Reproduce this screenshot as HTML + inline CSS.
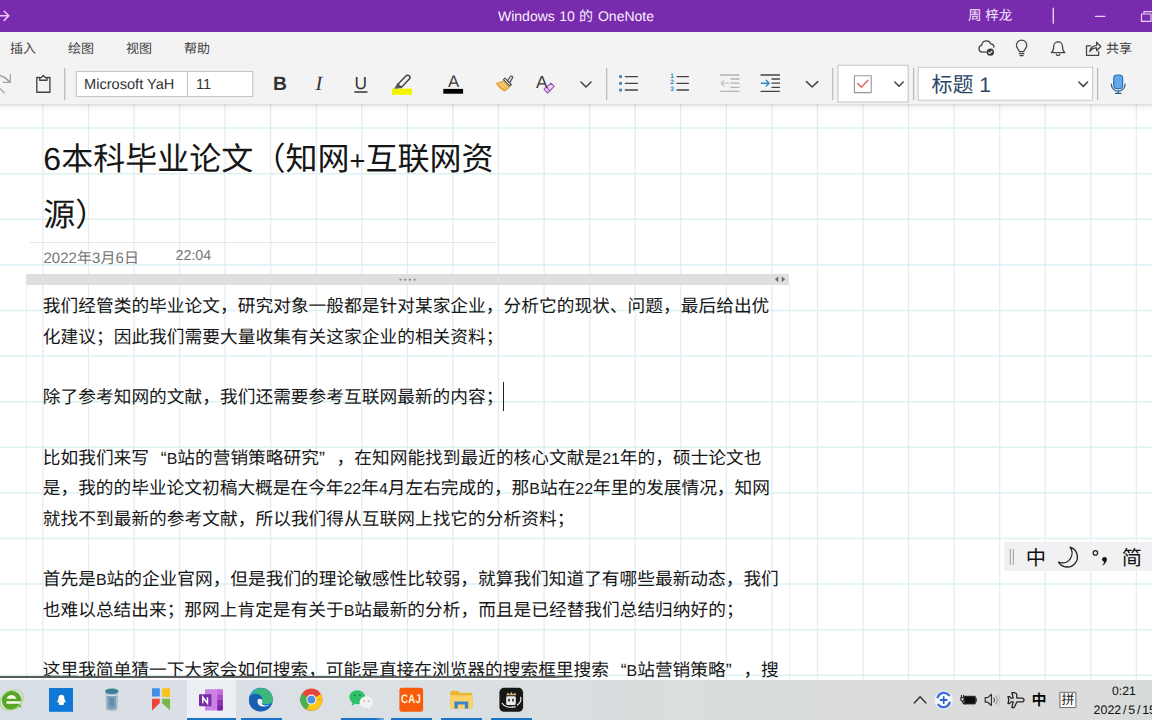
<!DOCTYPE html>
<html lang="zh-CN">
<head>
<meta charset="utf-8">
<title>Windows 10 的 OneNote</title>
<style>
*{box-sizing:border-box;margin:0;padding:0}
html,body{width:1152px;height:720px;overflow:hidden;background:#fff}
body{font-family:"Liberation Sans",sans-serif;position:relative;color:#000}
.abs{position:absolute}
/* title bar */
#titlebar{position:absolute;left:0;top:0;width:1152px;height:32px;background:#792bae;color:#fff}
#titlebar .t{position:absolute;top:7.400px;color:#f9effd;font-size:14px;line-height:18px;white-space:nowrap}
/* ribbon */
#ribbon{position:absolute;left:0;top:32px;width:1152px;height:72px;background:#f3f3f3}
#ribbon:after{content:"";position:absolute;left:0;top:72px;width:1152px;height:8px;background:linear-gradient(rgba(0,0,0,.15) 0,rgba(0,0,0,.06) 25%,rgba(0,0,0,.02) 60%,rgba(0,0,0,0) 100%)}
.menu{position:absolute;top:9px;font-size:13px;line-height:16px;color:#444;white-space:nowrap}
/* page */
#page{position:absolute;left:0;top:104px;width:1152px;height:576px;background:#fff;overflow:hidden}
#grid{position:absolute;left:0;top:0}
body{text-rendering:geometricPrecision}
.ttl{position:absolute;left:43.300px;font-size:32px;line-height:40px;white-space:nowrap;color:#161616;width:450.300px;text-align:justify;text-align-last:justify}
.ln{position:absolute;left:42.800px;font-size:17.700px;line-height:24px;height:24px;white-space:nowrap;color:#161616;text-align:justify;text-align-last:justify}
.l{font-size:.9em}
.q{display:inline-block;width:1em}
.ql{text-align:right;text-align-last:right}.qr{text-align:left;text-align-last:left}
/* taskbar */
#taskbar{position:absolute;left:0;top:679.500px;width:1152px;height:40.500px;background:linear-gradient(90deg,#d8dee5 0,#dbe0e5 30%,#d8dede 55%,#dbdcdc 75%,#dcdcdc 95%,#d6dcd9 100%)}
</style>
</head>
<body>
<div id="page">
  <svg id="grid" width="1152" height="576">
    <path d="M0 24.1H1152M0 69.7H1152M0 115.3H1152M0 160.9H1152M0 206.5H1152M0 252.1H1152M0 297.7H1152M0 343.3H1152M0 388.9H1152M0 434.5H1152M0 480.1H1152M0 525.7H1152M0 571.3H1152" stroke="#ddf1f3" stroke-width="1.5"/>
    <path d="M-2.7 0V576M42.9 0V576M88.5 0V576M134.0 0V576M179.6 0V576M225.1 0V576M270.7 0V576M316.3 0V576M361.8 0V576M407.4 0V576M452.9 0V576M498.5 0V576M544.1 0V576M589.6 0V576M635.2 0V576M680.7 0V576M726.3 0V576M771.9 0V576M817.4 0V576M863.0 0V576M908.5 0V576M954.1 0V576M999.7 0V576M1045.2 0V576M1090.8 0V576M1136.3 0V576M1181.9 0V576" stroke="#e5ebee" stroke-width="1.25"/>
  </svg>
</div>

<div class="ttl" style="top:139.300px">6本科毕业论文（知网<span style="font-size:.85em">+</span>互联网资</div>
<div class="ttl" style="top:194.500px;width:64px">源）</div>
<div class="abs" style="left:43.500px;top:250px;font-size:15px;line-height:18px;color:#767676;white-space:nowrap;width:95.500px;text-align:justify;text-align-last:justify">2022年3月6日</div>
<div class="abs" style="left:175.500px;top:246.500px;font-size:14.300px;line-height:18px;color:#767676;white-space:nowrap">22:04</div>

<div class="abs" style="left:30px;top:242px;width:467px;height:1px;background:#e6e6e6"></div>
<div class="abs" style="left:26px;top:274px;width:763px;height:10.500px;background:#dfdfdf"></div>
<div class="abs" style="left:26px;top:284px;width:1px;height:396px;background:#eeeeee"></div>
<div class="abs" style="left:788.500px;top:284px;width:1px;height:396px;background:#eeeeee"></div>
<svg class="abs" style="left:390px;top:274px" width="410" height="11" viewBox="390 274 410 11">
  <path d="M399.500 278.800h2v1.800h-2zM404.200 278.800h2v1.800h-2zM408.900 278.800h2v1.800h-2zM413.600 278.800h2v1.800h-2z" fill="#858585"/>
  <path d="M778.300 276.300v6l-3.300-3zM781.800 276.300v6l3.300-3z" fill="#6e6e6e"/>
</svg>
<div class="abs" style="left:503.100px;top:382px;width:1.300px;height:29px;background:#222"></div>

<div class="ln" style="top:294.20px;width:726.5px">我们经管类的毕业论文，研究对象一般都是针对某家企业，分析它的现状、问题，最后给出优</div>
<div class="ln" style="top:324.53px;width:460.7px">化建议；因此我们需要大量收集有关这家企业的相关资料；</div>
<div class="ln" style="top:385.19px;width:460.7px">除了参考知网的文献，我们还需要参考互联网最新的内容；</div>
<div class="ln" style="top:445.85px;width:718.7px">比如我们来写<span class="q ql">“</span><span class="l">B</span>站的营销策略研究<span class="q qr">”</span>，在知网能找到最近的核心文献是<span class="l">21</span>年的，硕士论文也</div>
<div class="ln" style="top:476.18px;width:727.2px">是，我的的毕业论文初稿大概是在今年<span class="l">22</span>年<span class="l">4</span>月左右完成的，那<span class="l">B</span>站在<span class="l">22</span>年里的发展情况，知网</div>
<div class="ln" style="top:506.51px;width:531.6px">就找不到最新的参考文献，所以我们得从互联网上找它的分析资料；</div>
<div class="ln" style="top:567.17px;width:736.0px">首先是<span class="l">B</span>站的企业官网，但是我们的理论敏感性比较弱，就算我们知道了有哪些最新动态，我们</div>
<div class="ln" style="top:597.50px;width:700.8px">也难以总结出来；那网上肯定是有关于<span class="l">B</span>站最新的分析，而且是已经替我们总结归纳好的；</div>
<div class="ln" style="top:658.16px;width:736.0px">这里我简单猜一下大家会如何搜索，可能是直接在浏览器的搜索框里搜索<span class="q ql">“</span><span class="l">B</span>站营销策略<span class="q qr">”</span>，搜</div>

<div id="titlebar">
  <svg class="abs" style="left:0;top:0" width="1152" height="32" viewBox="0 0 1152 32" fill="none" stroke-linecap="round" stroke-linejoin="round">
    <path d="M-4 15.8H8.6M4.2 11.2L8.8 15.8L4.2 20.4" stroke="#eec8ff" stroke-width="1.5"/>
    <path d="M1053.3 8.2V23.2" stroke="#f1dcfa" stroke-width="1.3"/>
    <path d="M1095.5 16.4H1104.8" stroke="#e9cdf5" stroke-width="1.2"/>
    <path d="M1141.5 14H1151v7.4H1141.5zM1144 14v-2.4h9" stroke="#ecd2f7" stroke-width="1.2"/>
  </svg>
  <div class="t" style="left:498px;width:156px;text-align:justify;text-align-last:justify">Windows 10 的 OneNote</div>
  <div class="t" style="left:968px;width:44px;font-size:13.5px;text-align:justify;text-align-last:justify;color:#f6e6fc">周 梓龙</div>
</div>

<div id="ribbon">
  <div class="menu" style="left:10px">插入</div>
  <div class="menu" style="left:68px">绘图</div>
  <div class="menu" style="left:126px">视图</div>
  <div class="menu" style="left:184px">帮助</div>
  <div class="menu" style="left:1106px;color:#333">共享</div>
  <!-- right status icons (y offset: ribbon top = 32) -->
  <svg class="abs" style="left:970px;top:4px" width="140" height="26" viewBox="970 36 140 26" fill="none" stroke="#444" stroke-width="1.25" stroke-linecap="round" stroke-linejoin="round">
    <!-- cloud -->
    <path d="M986.5 52.2H982.3a3.6 3.6 0 0 1-.5-7.1a4.6 4.6 0 0 1 8.9-1.2a3.4 3.4 0 0 1 3.3 3.2"/>
    <circle cx="990.4" cy="52.2" r="3.6" fill="#3a3a3a" stroke="none"/>
    <path d="M988.7 52.3l1.2 1.2l2.1-2.4" stroke="#fff" stroke-width="1.1"/>
    <!-- bulb -->
    <path d="M1019.3 51.6c0-2.2-2.9-3.2-2.9-6.3a5.2 5.2 0 0 1 10.4 0c0 3.100-2.900 4.100-2.900 6.300zM1019.300 53.600h4.600M1020 55.500h3.200"/>
    <!-- bell -->
    <path d="M1051.400 52.600c1.900-1.400 2.300-2.900 2.300-6.200a4.400 4.400 0 0 1 8.800 0c0 3.300.400 4.800 2.300 6.200zM1056.300 54.300a1.900 1.900 0 0 0 3.600 0"/>
    <!-- share -->
    <path d="M1090.500 45.800H1086.500V55.300H1098.700V51.600M1089.800 51.800c.4-3.900 2.900-6.300 6.800-6.300V42.200l4.200 4.300l-4.200 4.300V47.800c-3.100 0-5.300 1.100-6.800 4z"/>
  </svg>

  <!-- toolbar row, coords in page space via viewBox (y 60..108) -->
  <svg class="abs" style="left:0;top:28px" width="1152" height="48" viewBox="0 60 1152 48" fill="none" stroke-linecap="round" stroke-linejoin="round">
    <!-- redo (clipped) -->
    <path d="M-1 75.300C3.200 76.200 6.600 78.400 9.600 81.700M10.300 74.700V82.300H3.200M-1 87.600L4.400 92.900" stroke="#a3a3a3" stroke-width="1.3"/>
    <!-- clipboard -->
    <path d="M39.500 77.500H36.800V92.200H49.900V77.500H47.200M39.700 80.200V77.600H41.300L43.300 75.500L45.400 77.600H47V80.200z" stroke="#444" stroke-width="1.35"/>
    <!-- separators -->
    <path d="M64.700 68.300V99.700M606.700 68.300V99.500M832.700 68.300V99.500M913.600 68.300V99.500M1097.600 68.300V99.500" stroke="#bdbdbd" stroke-width="1.3"/>
    <!-- font boxes -->
    <rect x="76.300" y="71.500" width="176.400" height="25" fill="#fff" stroke="#c6c6c6" stroke-width="1.100"/>
    <path d="M187.500 71.500V96.500" stroke="#c6c6c6" stroke-width="1.100"/>
    <!-- underline for U -->
    <path d="M354.800 92H367" stroke="#333" stroke-width="1.300"/>
    <!-- highlighter -->
    <rect x="392" y="88.600" width="20" height="6.200" fill="#f4f400" stroke="none"/>
    <path d="M397.900 84.200L405.900 75.900A2.300 2.300 0 0 1 409.300 79.100L401.300 87.400z" stroke="#3f4246" stroke-width="1.45"/>
    <path d="M397.700 84L401.500 87.600L395.200 88.300z" fill="#4a5157" stroke="#4a5157" stroke-width=".8"/>
    <!-- font color bar -->
    <rect x="443.300" y="88.900" width="19.800" height="4.800" fill="#000" stroke="none"/>
    <!-- format painter -->
    <path d="M503 81.200L509.200 87.200L504.300 91.100C501.200 89.300 498.400 86.500 496.500 83.400z" fill="#f4cd7e" stroke="#e3a12b" stroke-width="1.1"/>
    <path d="M498.800 84.600C501 87 503.600 88.900 506 90M500.500 82.800C502.800 85.200 505.500 87.300 507.800 88.400" stroke="#e0a030" stroke-width=".9"/>
    <path d="M503.400 79.600L504.900 78.200L511.300 84.500L509.800 86z" fill="#fbfbfb" stroke="#4d4d4d" stroke-width="1.15"/>
    <path d="M507.600 80.700L510.300 76.600A1.100 1.100 0 0 1 512.500 77.900L509.700 82.600z" fill="#f7f7f7" stroke="#4d4d4d" stroke-width="1.15"/>
    <!-- clear formatting eraser -->
    <path d="M544 89.100L551 83.200L554.100 86.400L547.500 93z" fill="#eed6f6" stroke="#a252c2" stroke-width="1.15"/>
    <path d="M546.400 87.200L549.900 90.800" stroke="#a252c2" stroke-width="1.1"/>
    <!-- bullets -->
    <path d="M625.300 76.600H637.500M625.300 83.300H637.500M625.300 90H637.500M677 76.600H688.500M677 83.300H688.500M677 90H688.500" stroke="#444" stroke-width="1.300"/>
    <path d="M619.200 75.300h2.700v2.700h-2.700zM619.200 82h2.700v2.700h-2.700zM619.200 88.700h2.700v2.700h-2.700z" fill="#2b88c8" stroke="none"/>
    <!-- outdent -->
    <path d="M720.500 75H739M720.500 91.300H739M731 79H739M731 83.200H739M731 87.400H739" stroke="#b4b4b4" stroke-width="1.300"/>
    <path d="M721 83.200H728.500M723.800 80.400L721 83.200L723.800 86" stroke="#c4c4c4" stroke-width="1.300"/>
    <!-- indent -->
    <path d="M761 75H779.500M761 91.300H779.500M772 79H779.500M772 83.200H779.500M772 87.400H779.500" stroke="#444" stroke-width="1.300"/>
    <path d="M761.300 83.200H769M766.200 80.300L769.100 83.200L766.200 86.100" stroke="#2b88c8" stroke-width="1.400"/>
    <!-- checkbox box -->
    <rect x="837.900" y="65.300" width="70.300" height="36.700" fill="#fff" stroke="#c4c4c4" stroke-width="1.100"/>
    <rect x="854.400" y="75.800" width="16.800" height="16.800" fill="#fff" stroke="#8f9aa0" stroke-width="1.100"/>
    <path d="M857.800 83.600l3.600 3.700l6.600-7" stroke="#dc6464" stroke-width="1.400"/>
    <!-- style box -->
    <rect x="918.200" y="67.200" width="174.400" height="33" fill="#fff" stroke="#c9c9c9" stroke-width="1.100"/>
    <!-- chevrons -->
    <path d="M581 82l5 5l5-5M806.500 81.600l5.600 5.400l5.600-5.400M894.800 82l4.200 4.200l4.200-4.200M1078.800 82l4.400 4.400l4.400-4.400" stroke="#444" stroke-width="1.500"/>
    <!-- mic -->
    <rect x="1113.700" y="75" width="9" height="13.600" rx="3.400" fill="#62a8ea" stroke="#2a6cb3" stroke-width="1.100"/>
    <path d="M1111.300 84.200a6.900 6.900 0 0 0 13.800 0M1118.200 91.200v2M1115.400 93.300h5.600" stroke="#27588f" stroke-width="1.200"/>
  </svg>
  <div class="abs tb" style="left:84px;top:44px;font-size:14.600px;line-height:18px;color:#333;width:86.800px;text-align:justify;text-align-last:justify;white-space:nowrap">Microsoft YaH</div>
  <div class="abs tb" style="left:196px;top:44px;font-size:14.600px;line-height:18px;color:#333;white-space:nowrap">11</div>
  <div class="abs" style="left:273px;top:41.700px;font-size:19.300px;line-height:22px;font-weight:bold;color:#333">B</div>
  <div class="abs" style="left:315.600px;top:41.300px;font-size:20.300px;line-height:22px;font-style:italic;color:#333;font-family:'Liberation Serif',serif">I</div>
  <div class="abs" style="left:354.500px;top:39.900px;font-size:17.300px;line-height:22px;color:#333">U</div>
  <div class="abs" style="left:448px;top:39.400px;font-size:16.800px;line-height:22px;color:#3c3c3c">A</div>
  <div class="abs" style="left:535.900px;top:38.800px;font-size:17.400px;line-height:22px;color:#3c3c3c">A</div>
  <div class="abs" style="left:669.600px;top:41.600px;font-size:6.500px;line-height:6.750px;color:#2b88c8;font-weight:bold;width:5px;text-align:center">1<br>2<br>3</div>
  <div class="abs" style="left:931.500px;top:41.200px;font-size:21px;line-height:26px;color:#2d4668;white-space:nowrap;width:58.500px;text-align:justify;text-align-last:justify">标题 1</div>
</div>

<!-- IME floating bar -->
<div class="abs" style="left:1004px;top:542px;width:148px;height:29px;background:#f1f1f4"></div>
<svg class="abs" style="left:1004px;top:542px" width="148" height="29" viewBox="1004 542 148 29" fill="none" stroke-linecap="round" stroke-linejoin="round">
  <path d="M1010.300 549.500V564.500M1013.300 549.500V564.500" stroke="#9c9c9c" stroke-width="1"/>
  <path d="M1070 547.200A10.100 10.100 0 1 1 1058.600 562.100A9.700 9.700 0 0 0 1070 547.200z" stroke="#222" stroke-width="1.350"/>
  <circle cx="1095.400" cy="552.900" r="2.200" stroke="#222" stroke-width="1.250"/>
  <path d="M1102.300 559.600a2.200 2.200 0 1 1 4.300.500c-.300 2.200-1.800 4.100-4.100 5.200c1.300-1.500 1.900-2.700 1.800-3.800c-1.100 0-2-.800-2-1.900z" fill="#111" stroke="#111" stroke-width=".4"/>
</svg>
<div class="abs" style="left:1025.800px;top:547.800px;font-size:20.300px;line-height:22px;color:#111;white-space:nowrap">中</div>
<div class="abs" style="left:1121.800px;top:548px;font-size:20.300px;line-height:22px;color:#111;white-space:nowrap">简</div>

<!-- horizontal scroll thumb -->
<div class="abs" style="left:0;top:675.700px;width:578px;height:2.300px;background:linear-gradient(90deg,#5a5a5a 0,#606060 96%,rgba(96,96,96,0) 100%)"></div>

<div id="taskbar">
  <div class="abs" style="left:187px;top:0;width:49px;height:40.500px;background:#eceff4"></div>
  <div class="abs" style="left:187px;top:38.900px;width:49px;height:1.600px;background:#1a73c7"></div>
  <div class="abs" style="left:241px;top:38.900px;width:40.700px;height:1.600px;background:#1a73c7"></div>
  <div class="abs" style="left:341px;top:38.900px;width:42.500px;height:1.600px;background:linear-gradient(90deg,#1a73c7 80%,#7fb0e0)"></div>
  <div class="abs" style="left:391px;top:38.900px;width:40.700px;height:1.600px;background:#1a73c7"></div>
  <div class="abs" style="left:441.300px;top:38.900px;width:40.700px;height:1.600px;background:#1a73c7"></div>
  <div class="abs" style="left:491px;top:38.900px;width:40.700px;height:1.600px;background:#1a73c7"></div>
  <svg class="abs" style="left:0;top:.500px" width="1152" height="40" viewBox="0 680 1152 40" fill="none" stroke-linecap="round" stroke-linejoin="round">
    <!-- 360 browser e -->
    <circle cx="11.600" cy="700.400" r="9.700" fill="#58a528"/>
    <path d="M6.600 698.700c.600-2.300 2.500-3.700 4.900-3.700s4.300 1.400 4.800 3.700z" fill="#f4fbe9"/>
    <path d="M6.300 701.300H20.800V703.800H6.600z" fill="#f4fbe9"/>
    <path d="M17.300 705.200l3.600 1.200" stroke="#58a528" stroke-width="2.2" stroke-linecap="butt"/>
    <ellipse cx="11.600" cy="700" rx="12.300" ry="9.300" transform="rotate(-32 11.600 700)" stroke="#a9dc7d" stroke-width="1.100"/>
    <!-- QQ -->
    <rect x="49" y="688" width="24" height="23.800" fill="#0f78d6"/>
    <g transform="translate(61.400 700) scale(.76) translate(-61 -699.500)">
    <path d="M61 692.600c-2.600 0-3.900 1.900-3.900 4.500c0 .8 0 1.300-.5 2.100c-.8 1.200-1.400 2.400-1.100 3.300c.3.500.9-.1 1.300-.7c.2 1 .7 1.700 1.400 2.300c-.7.300-1.100.7-1.100 1.100c0 .7 1.500.9 3.900.9s3.900-.2 3.900-.9c0-.4-.4-.8-1.100-1.100c.7-.6 1.200-1.300 1.400-2.300c.4.600 1 1.200 1.300.7c.3-.9-.3-2.100-1.100-3.300c-.5-.8-.5-1.300-.5-2.100c0-2.600-1.300-4.500-3.900-4.500z" fill="#fff"/>
    <path d="M58.300 700.200c1.700.8 3.700.8 5.400 0l-.4 2.700c-1.500.5-3.100.5-4.600 0z" fill="#ffecd0"/>
    </g>
    <!-- recycle bin -->
    <path d="M105.600 691.800c0-2.300 12.300-2.300 12.300 0l-.3 17.300c-.3 2.600-11.400 2.600-11.700 0z" fill="#a9bcc8"/>
    <path d="M107.400 695.400h8.700v12.800c-1.400 1.400-7.300 1.400-8.700 0z" fill="#7ea0b6"/>
    <ellipse cx="111.750" cy="691.300" rx="6.700" ry="2.800" fill="#3d8094"/>
    <path d="M109.500 697.500h4.500v8.800h-4.500z" fill="#5f8fae"/>
    <path d="M105.500 694.600c2 1.400 10.500 1.400 12.500 0" stroke="#d8e4ea" stroke-width="1.100"/>
    <!-- bookmark quad icon -->
    <path d="M152 688.300h7.800v8.200H152z" fill="#3f8eea"/>
    <path d="M162.200 688.300h7.800v8.600h-7.800z" fill="#fbc215"/>
    <path d="M152 698.800h7.800v4.300L152 710.500z" fill="#ef4437"/>
    <path d="M162.200 698.800h7.800v11.500l-7.800-7z" fill="#7ab648"/>
    <!-- OneNote -->
    <path d="M205 689.300h16.600a1.300 1.300 0 0 1 1.300 1.300v18.700a1.300 1.300 0 0 1-1.300 1.300H205z" fill="#c982e4"/>
    <path d="M217.300 689.300h4.300a1.300 1.300 0 0 1 1.300 1.300v4.100h-5.600z" fill="#c56fe0"/>
    <path d="M217.300 694.700h5.600v5.300h-5.600z" fill="#a74ccb"/>
    <path d="M217.300 700h5.600v5.300h-5.600z" fill="#8e32b4"/>
    <path d="M217.300 705.300h5.600v4a1.300 1.300 0 0 1-1.300 1.300h-4.300z" fill="#7a22a0"/>
    <rect x="199" y="694.200" width="12.400" height="12" rx=".9" fill="#7a2aa4"/>
    <path d="M202.800 703.300v-6.100l4.700 6.100v-6.100" stroke="#fff" stroke-width="1.500" stroke-linejoin="miter" stroke-linecap="butt"/>
    <!-- Edge -->
    <circle cx="261" cy="699.600" r="11.900" fill="#1e7ecf"/>
    <path d="M249.200 698.300a11.900 11.900 0 0 1 23.500-.6c.6 3.600-1.400 6.300-4.800 6.300h-5.700c-.6-3.200-3.600-5.600-7-4.700c-2.800.7-4.700 2.700-6-.1z" fill="#3cb77d"/>
    <path d="M249.300 697.200c1-4.400 5-8.600 10.400-9.400c-4 1-6.700 4.700-7 8.500c-1.300-.1-2.400.2-3.400.9z" fill="#35a6dc"/>
    <path d="M249.700 696c4-3.600 12.300-2.800 12.700 3.600c.1 1.400-1 2.700-.3 3.900c1.300 2.300 7.300 1.300 9.700-.6c-1.300 5-7.300 9.300-13.700 8.300c-7.700-1.700-10.700-9.100-8.400-15.200z" fill="#165fb3"/>
    <path d="M258 699.300c1.900-1.300 4.500-.3 4.400 1.900c0 .9-.8 1.900-.3 2.800c.9 1.700 4.600 1.900 7.700.4c-3.400 3-9.800 2.900-11.600-.5c-.8-1.500-.9-3.300-.2-4.600z" fill="#e8f1fa"/>
    <!-- Chrome -->
    <circle cx="311.400" cy="699.600" r="11" fill="#e8453c"/>
    <path d="M311.400 699.600L301.870 694.100A11 11 0 0 0 311.400 710.600z" fill="#4caf50"/>
    <path d="M311.400 699.600L301.870 694.100A11 11 0 0 0 306.500 709.450z" fill="#4caf50"/>
    <path d="M311.400 699.600H322.400A11 11 0 0 1 306.600 709.500z" fill="#fbc918"/>
    <path d="M311.400 699.600L320.900 694.100A11 11 0 0 1 322.400 699.600z" fill="#fbc918"/>
    <circle cx="311.400" cy="699.600" r="5" fill="#f4f4f4"/>
    <circle cx="311.400" cy="699.600" r="3.900" fill="#4a8fe0"/>
    <!-- WeChat -->
    <ellipse cx="357.200" cy="697.300" rx="7.800" ry="7" fill="#2fc06a"/>
    <path d="M352.500 702.500l-1 3.300l3.700-1.900z" fill="#2fc06a"/>
    <ellipse cx="366.300" cy="702.200" rx="6.700" ry="5.900" fill="#f1f2f3"/>
    <path d="M369.800 706.700l.9 2.400l-3-1.300z" fill="#f1f2f3"/>
    <circle cx="354.600" cy="695.300" r="1" fill="#1c8f49"/><circle cx="359.800" cy="695.300" r="1" fill="#1c8f49"/>
    <circle cx="364.200" cy="700.900" r=".9" fill="#c9a4a8"/><circle cx="368.500" cy="700.900" r=".9" fill="#c9a4a8"/>
    <!-- CAJ -->
    <rect x="399.400" y="687.800" width="23.700" height="24" rx="2.400" fill="#f85b0b"/>
    <!-- Explorer -->
    <path d="M450.200 693.300c0-1.600.9-2.600 2.300-2.600h5.300l2.100 2h10.300c1.300 0 2.200.8 2.200 2.100v13.600h-22.200z" fill="#e9b62f"/>
    <path d="M450.200 695.300h22.200v13.100h-22.200z" fill="#fad267"/>
    <path d="M454.400 708.600v-7.200h13.800v7.200h-3.400v-4.100h-7v4.100z" fill="#3a86c8"/>
    <!-- dark app -->
    <rect x="499.400" y="687.800" width="23.700" height="24" rx="4.600" fill="#171717"/>
    <path d="M506.200 695.200l1.700-2.600l1.600 2l1.900-2.700l1.800 2.700l1.800-2l1.500 2.600z" fill="#d9b87c"/>
    <rect x="506.200" y="696.300" width="9.600" height="8.800" rx="1.400" fill="#ececec"/>
    <rect x="508.300" y="698.800" width="1.500" height="2.700" fill="#171717"/><rect x="512.200" y="698.800" width="1.500" height="2.700" fill="#171717"/>
    <path d="M502.200 703.300c1.700 3.300 7 4.700 12 3.500M517.300 705c2.600-1.700 4.100-4.600 3.400-7.700M512 706.900h3.200" stroke="#ececec" stroke-width="1.200"/>
    <!-- tray chevron -->
    <path d="M914.300 703l5.800-6.300l5.800 6.300" stroke="#333" stroke-width="1.400"/>
    <!-- sync -->
    <circle cx="943.700" cy="700" r="9.200" fill="#eef2fb"/>
    <circle cx="943.700" cy="700" r="6.600" fill="#fff"/>
    <path d="M937.700 697.300a6.600 6.600 0 0 1 11.300-2.100M949.700 702.700a6.600 6.600 0 0 1-11.300 2.100" stroke="#3b6fd9" stroke-width="2.300"/>
    <path d="M943.700 696.800v6.400M940.500 700h6.400" stroke="#2f63d4" stroke-width="1.800"/>
    <!-- battery -->
    <rect x="964.600" y="696.300" width="10.600" height="7.600" fill="#0c0c0c" stroke="#222" stroke-width="1"/>
    <path d="M976.100 698.600v3" stroke="#222" stroke-width="1.300"/>
    <path d="M961.500 695.300v2.400M963.700 695.300v2.400M960.800 697.800h3.600v1.600c0 1.100-.8 1.700-1.800 1.700s-1.800-.6-1.800-1.700zM962.600 701.200c0 2 1 2.700 2.600 2.700" stroke="#222" stroke-width="1.100"/>
    <!-- speaker -->
    <path d="M985.200 697.600h2.500l3.700-3.300v11.200l-3.700-3.300h-2.500z" stroke="#333" stroke-width="1.200"/>
    <path d="M993.700 697.800a3.300 3.300 0 0 1 0 4.200" stroke="#555" stroke-width="1.100"/>
    <path d="M995.700 696a6 6 0 0 1 0 7.800" stroke="#999" stroke-width="1.100"/>
    <path d="M997.800 694.300a8.700 8.700 0 0 1 0 11.200" stroke="#c3c3c3" stroke-width="1.100"/>
    <!-- airplane -->
    <path d="M1015.300 692.800c.9 0 1.500.8 1.500 1.900v3.100h5.300c1.100 0 1.900.9 1.900 1.900s-.8 1.900-1.900 1.900h-5.300l-2.600 5.600h-2.300l1.300-5.600h-2.200l-1.500 1.600h-1.500l.8-3.500l-.8-3.500h1.500l1.500 1.600h2.200l-1.300-5.600h2.300z" transform="translate(0 .3)" stroke="#222" stroke-width="1.250"/>
    <!-- pin box -->
    <rect x="1060.300" y="692.300" width="15.600" height="15.300" fill="#fdfdfd" stroke="#6d6d6d" stroke-width="1"/>
  </svg>
  <div class="abs" style="left:398.200px;top:13.600px;width:26px;font-size:12.300px;line-height:13px;font-weight:bold;color:#fff3d8;text-align:center;transform:scaleX(.78);letter-spacing:.3px">CAJ</div>
  <div class="abs" style="left:1031.800px;top:12.700px;font-size:14.600px;line-height:18px;font-weight:bold;color:#000;white-space:nowrap">中</div>
  <div class="abs" style="left:1061.600px;top:11px;font-size:13px;line-height:17px;color:#222;white-space:nowrap;font-family:'Liberation Serif',serif">拼</div>
  <div class="abs" style="left:1112px;top:4.500px;font-size:12.200px;line-height:15px;color:#111;white-space:nowrap;width:23px;text-align:justify;text-align-last:justify">0:21</div>
  <div class="abs" style="left:1093.600px;top:23.200px;font-size:12.400px;line-height:15px;color:#111;white-space:nowrap">2022<span style="padding:0 1.800px">/</span>5<span style="padding:0 1.800px">/</span>15</div>
</div>
</body>
</html>
